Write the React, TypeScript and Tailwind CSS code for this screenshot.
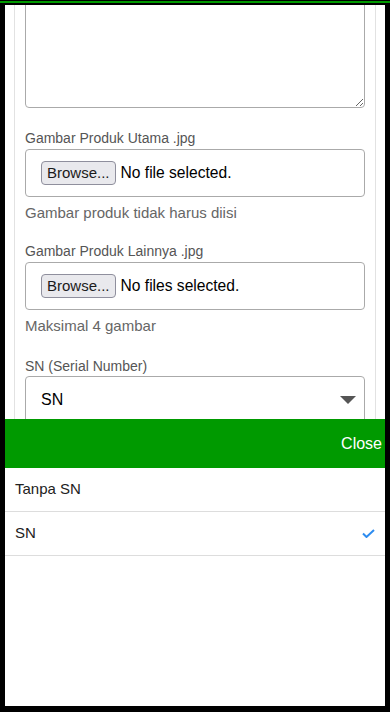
import React from "react";

const font = { fontFamily: '"Liberation Sans", Arial, sans-serif' };

const FileField = ({ label, empty, help, className }: { label: string; empty: string; help: string; className: string }) => (
  <div className={className}>
    <div className="text-[14px] leading-5 text-[#555]">{label}</div>
    <div className="mt-px flex h-[48px] items-center rounded-[4px] border border-[#aaa] px-[15px]">
      <span className="flex h-[24px] items-center rounded-[4px] border border-[#8f8f9d] bg-[#e9e9ed] px-[5px] text-[15px] text-[#1b1b1b]">
        Browse...
      </span>
      <span className="ml-[5px] text-[15.6px] text-black">{empty}</span>
    </div>
    <div className="mt-[6px] text-[15px] leading-5 text-[#666]">{help}</div>
  </div>
);

export default function App() {
  return (
    <div style={font} className="flex h-[712px] w-[390px] flex-col bg-black">
      <div className="mt-px h-[2px] bg-[#009a00]" />
      <div className="relative mx-[5px] mt-[2px] h-[701px] overflow-hidden bg-white">
        <div className="mx-[9px] h-full border-x border-[#e2e2e2] px-[10px]">
          <textarea
            readOnly
            className="-mt-[17px] block h-[120px] w-full rounded-[4px] border border-[#aaa] bg-white"
          />
          <FileField
            className="mt-5"
            label="Gambar Produk Utama .jpg"
            empty="No file selected."
            help="Gambar produk tidak harus diisi"
          />
          <FileField
            className="mt-[18px]"
            label="Gambar Produk Lainnya .jpg"
            empty="No files selected."
            help="Maksimal 4 gambar"
          />
          <div className="mt-[20px] text-[14px] leading-5 text-[#555]">SN (Serial Number)</div>
          <div className="flex h-[48px] items-center justify-between rounded-[4px] border border-[#aaa] pl-[15px] pr-[8px]">
            <span className="text-[16px] text-black">SN</span>
            <svg width="16" height="8" viewBox="0 0 16 8">
              <path d="M0 0h16L8 8z" fill="#555" />
            </svg>
          </div>
        </div>

        {/* bottom sheet picker */}
        <div className="absolute inset-x-0 bottom-0 top-[414px] bg-white">
          <div className="flex h-[49px] items-center justify-end bg-[#009a00] pr-[3px]">
            <span className="text-[16px] text-white">Close</span>
          </div>
          <div className="flex h-[44px] items-center border-b border-[#ddd] px-[10px] text-[15px] text-[#222]">
            Tanpa SN
          </div>
          <div className="flex h-[44px] items-center justify-between border-b border-[#ddd] pl-[10px] pr-[10px] text-[15px] text-[#222]">
            <span>SN</span>
            <svg width="13" height="9" viewBox="0 0 13 9">
              <path d="M1 4.5l3.5 3.5L12 1" fill="none" stroke="#2d8cf0" strokeWidth="2" />
            </svg>
          </div>
        </div>
      </div>
    </div>
  );
}
